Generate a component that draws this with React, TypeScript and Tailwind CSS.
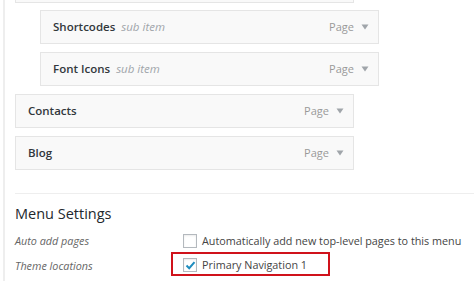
import React from "react";

type Item = { title: string; sub?: boolean };

const MenuItem: React.FC<Item> = ({ title, sub }) => {
  return (
    <div
      className={`flex h-[34px] w-[339px] items-center justify-between border border-[#e5e5e5] bg-[#f9f9f9] pl-[12px] pr-[9px] ${
        sub ? "ml-[25px]" : ""
      }`}
    >
      <div className="flex items-baseline gap-[6px] whitespace-nowrap">
        <span className="text-[11.5px] font-semibold text-[#32373c]">{title}</span>
        {sub && <span className="text-[11.5px] italic text-[#a0a5aa]">sub item</span>}
      </div>
      <div className="flex items-center gap-[7px]">
        <span className="text-[11px] text-[#999]">Page</span>
        <svg width="8" height="6" viewBox="0 0 8 6" className="text-[#a0a5aa]">
          <path d="M0.5 0.5 L7.5 0.5 L4 5.5 Z" fill="currentColor" />
        </svg>
      </div>
    </div>
  );
};

const Checkbox: React.FC<{ checked?: boolean }> = ({ checked }) => (
  <span className="flex h-[14px] w-[14px] shrink-0 items-center justify-center border border-[#b4b9be] bg-white shadow-[inset_0_1px_2px_rgba(0,0,0,0.08)]">
    {checked && (
      <svg width="11" height="9" viewBox="0 0 11 9">
        <path d="M1.5 4.5 L4.2 7.2 L9.5 1.2" stroke="#1e8cbe" strokeWidth="2" fill="none" />
      </svg>
    )}
  </span>
);

export default function App() {
  return (
    <div className="h-[281px] w-[474px] overflow-hidden bg-white font-['Open_Sans',sans-serif] text-[#444]">
      <div className="ml-[3px] h-full border-l-2 border-[#eeeeee] pl-[10px]">
        {/* tail of the parent item above */}
        <div className="h-[3px] w-[339px] border-x border-b border-[#e5e5e5] bg-[#f9f9f9]" />

        <div className="mt-[7px] flex flex-col gap-[8px]">
          <MenuItem title="Shortcodes" sub />
          <MenuItem title="Font Icons" sub />
          <MenuItem title="Contacts" />
          <MenuItem title="Blog" />
        </div>

        <div className="mt-[23px] border-t border-[#eeeeee] pt-[10px]">
          <h3 className="text-[14.5px] leading-[20px] text-[#23282d]">Menu Settings</h3>

          <div className="mt-[10px] flex h-[14px] items-center whitespace-nowrap">
            <span className="w-[168px] text-[10.8px] italic text-[#666]">Auto add pages</span>
            <label className="flex items-center gap-[5px] text-[10.8px] text-[#444]">
              <Checkbox />
              Automatically add new top-level pages to this menu
            </label>
          </div>

          <div className="mt-[4px] flex items-start whitespace-nowrap">
            <span className="mt-[6px] w-[156px] text-[10.8px] leading-[16px] italic text-[#666]">
              Theme locations
            </span>
            <div className="flex h-[24px] w-[159px] items-center gap-[5px] border-2 border-[#d0121b] pl-[10px] pt-[2px] text-[10.8px] text-[#444]">
              <Checkbox checked />
              Primary Navigation 1
            </div>
          </div>
        </div>
      </div>
    </div>
  );
}
